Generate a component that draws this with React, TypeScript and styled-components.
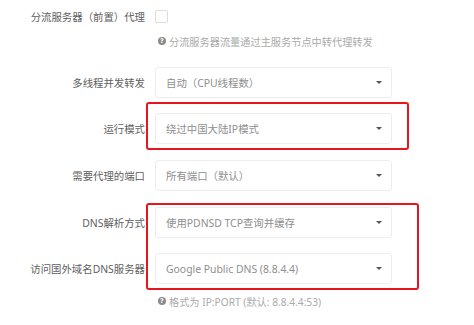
import React from 'react';
import styled, { createGlobalStyle } from 'styled-components';

const GlobalStyle = createGlobalStyle`
    html, body {
        margin: 0;
        padding: 0;
        background: #ffffff;
    }
    body {
        font-family: "Noto Sans", "Noto Sans CJK SC", sans-serif;
        font-size: 10.5px;
        color: #555;
    }
`;

const Form = styled.div`
    position: relative;
    width: 474px;
    height: 325px;
    display: flex;
    flex-direction: column;
`;

const Row = styled.div<{ $height?: number; $mt?: number }>`
    display: grid;
    grid-template-columns: 145px 237px;
    column-gap: 10px;
    align-items: center;
    height: ${p => p.$height || 31}px;
    margin-top: ${p => p.$mt || 0}px;
`;

const Label = styled.div`
    text-align: right;
    font-size: 10.4px;
    color: #606060;
    white-space: nowrap;
    font-family: "Noto Sans", "Noto Sans CJK SC", sans-serif;
`;

const Checkbox = styled.span`
    display: block;
    width: 11px;
    height: 11px;
    border: 1px solid #dcdcdc;
    border-radius: 2px;
    background: #fff;
`;

const Select = styled.div`
    box-sizing: border-box;
    height: 31px;
    border: 1px solid #ededed;
    border-radius: 3px;
    background: #fff;
    display: flex;
    align-items: center;
    justify-content: space-between;
    padding: 0 9px 0 10px;
    color: #8e8e8e;
    font-size: 10.4px;
    white-space: nowrap;
`;

const Caret = styled.span`
    width: 0;
    height: 0;
    border-left: 3.5px solid transparent;
    border-right: 3.5px solid transparent;
    border-top: 3.5px solid #555;
`;

const Help = styled.div<{ $mt?: number }>`
    margin-left: 158px;
    margin-top: ${p => p.$mt || 0}px;
    height: 16px;
    display: flex;
    align-items: center;
    gap: 3px;
    color: #aaaaaa;
    font-size: 10.2px;
    white-space: nowrap;
`;

const HelpIcon = styled.span`
    width: 8px;
    height: 8px;
    border-radius: 50%;
    background: #8a8a8a;
    color: #fff;
    font-size: 6.5px;
    font-weight: 700;
    line-height: 8px;
    text-align: center;
    font-family: "DejaVu Sans", sans-serif;
`;

const Highlight = styled.div<{ $x: number; $y: number; $w: number; $h: number }>`
    position: absolute;
    left: ${p => p.$x}px;
    top: ${p => p.$y}px;
    width: ${p => p.$w}px;
    height: ${p => p.$h}px;
    box-sizing: border-box;
    border: 2px solid #e5161c;
    border-radius: 3px;
    pointer-events: none;
`;

const SelectRow = ({ label, value, mt }: { label: string; value: string; mt: number }) => (
    <Row $mt={mt}>
        <Label>{label}</Label>
        <Select>
            <span>{value}</span>
            <Caret />
        </Select>
    </Row>
);

const App = () => (
    <>
        <GlobalStyle />
        <Form>
            <Row $height={32}>
                <Label>分流服务器（前置）代理</Label>
                <Checkbox />
            </Row>
            <Help $mt={1}>
                <HelpIcon>?</HelpIcon>
                <span>分流服务器流量通过主服务节点中转代理转发</span>
            </Help>
            <SelectRow mt={18} label="多线程并发转发" value="自动（CPU线程数）" />
            <SelectRow mt={15} label="运行模式" value="绕过中国大陆IP模式" />
            <SelectRow mt={16} label="需要代理的端口" value="所有端口（默认）" />
            <SelectRow mt={16} label="DNS解析方式" value="使用PDNSD TCP查询并缓存" />
            <SelectRow mt={15} label="访问国外域名DNS服务器" value="Google Public DNS (8.8.4.4)" />
            <Help $mt={9}>
                <HelpIcon>?</HelpIcon>
                <span>格式为 IP:PORT (默认: 8.8.4.4:53)</span>
            </Help>
            <Highlight $x={146} $y={102} $w={263} $h={48} />
            <Highlight $x={146} $y={203} $w={273} $h={87} />
        </Form>
    </>
);

export default App;
